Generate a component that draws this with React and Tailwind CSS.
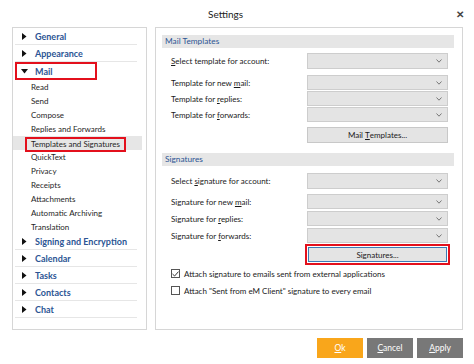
import React from "react";

const FONT = { fontFamily: 'Lato, "Open Sans", sans-serif' };

function Arrow({ down }) {
  return down ? (
    <svg width="7" height="5" viewBox="0 0 7 5" className="shrink-0">
      <polygon points="0,0 7,0 3.5,4.5" fill="#111" />
    </svg>
  ) : (
    <svg width="5" height="7" viewBox="0 0 5 7" className="shrink-0">
      <polygon points="0,0 4.5,3.5 0,7" fill="#111" />
    </svg>
  );
}

function TopItem({ label, h = "h-[17px]" }) {
  return (
    <div className={`${h} border-b border-[#e6e6e6] flex items-center`}>
      <div className="w-[20px] shrink-0 flex pl-[7px]">
        <Arrow />
      </div>
      <span className="text-[9px] font-bold text-[#2c5594] leading-none whitespace-nowrap">{label}</span>
    </div>
  );
}

function SubItem({ label, active }) {
  if (active) {
    return (
      <div className="h-[14px] flex items-center bg-[#e6e6e6] ml-[-2px] mr-[-5px] pl-[12px]">
        <span className="border-2 border-[#e3101c] px-[4px] h-[15px] mt-[2px] flex items-center text-[8px] text-[#1f1f1f] leading-none whitespace-nowrap">
          {label}
        </span>
      </div>
    );
  }
  return (
    <div className="h-[14px] flex items-center pl-[16px] text-[8px] text-[#1f1f1f] leading-none whitespace-nowrap">
      {label}
    </div>
  );
}

function Chevron() {
  return (
    <svg width="6" height="4" viewBox="0 0 6 4">
      <polyline points="0.5,0.5 3,3.2 5.5,0.5" fill="none" stroke="#777" strokeWidth="1" />
    </svg>
  );
}

function Dropdown({ h = "h-[16px]" }) {
  return (
    <div className={`${h} w-[141px] shrink-0 bg-[#e4e4e4] border border-[#cdcdcd] flex items-center justify-end pr-[5px]`}>
      <Chevron />
    </div>
  );
}

function Row({ children, h }) {
  return (
    <div className="flex items-center pr-[6px]">
      <div className="flex-1 pl-[9px] text-[8px] text-[#1a1a1a] leading-none whitespace-nowrap">{children}</div>
      <Dropdown h={h} />
    </div>
  );
}

function Header({ children }) {
  return (
    <div className="h-[13px] bg-[#e6e6e6] flex items-center pl-[3px] text-[8.3px] text-[#2c5594] leading-none whitespace-nowrap">
      {children}
    </div>
  );
}

function Checkbox({ checked, children }) {
  return (
    <div className="h-[11px] flex items-center pl-[9px]">
      <div className="w-[9px] h-[9px] shrink-0 border border-[#555] bg-white flex items-center justify-center">
        {checked && (
          <svg width="7" height="6" viewBox="0 0 7 6">
            <polyline points="0.5,3 2.6,5 6.5,0.6" fill="none" stroke="#333" strokeWidth="1" />
          </svg>
        )}
      </div>
      <span className="ml-[4px] text-[8px] text-[#1a1a1a] leading-none whitespace-nowrap">{children}</span>
    </div>
  );
}

export default function App() {
  return (
    <div className="w-[474px] h-[364px] bg-white overflow-hidden" style={FONT}>
      <div className="h-[27px] flex items-center">
        <span className="ml-[208px] text-[10px] text-[#222] leading-none">Settings</span>
        <span className="ml-auto mr-[10px] text-[10px] font-bold text-[#444] leading-none">✕</span>
      </div>
      <div className="flex pl-[12px] gap-[8px]">
        {/* Left panel */}
        <div className="w-[135px] h-[303px] border border-[#d6d6d6] bg-white pl-[2px] pr-[9px]">
          <TopItem label="General" />
          <TopItem label="Appearance" />
          <div className="h-[18px] w-[82px] border-2 border-[#e3101c] flex items-center">
            <div className="w-[18px] shrink-0 flex pl-[4px]">
              <Arrow down />
            </div>
            <span className="text-[9px] font-bold text-[#2c5594] leading-none">Mail</span>
          </div>
          <SubItem label="Read" />
          <SubItem label="Send" />
          <SubItem label="Compose" />
          <SubItem label="Replies and Forwards" />
          <SubItem label="Templates and Signatures" active />
          <SubItem label="QuickText" />
          <SubItem label="Privacy" />
          <SubItem label="Receipts" />
          <SubItem label="Attachments" />
          <SubItem label="Automatic Archiving" />
          <SubItem label="Translation" />
          <TopItem label="Signing and Encryption" h="h-[16px]" />
          <TopItem label="Calendar" />
          <TopItem label="Tasks" />
          <TopItem label="Contacts" />
          <TopItem label="Chat" />
        </div>
        {/* Right panel */}
        <div className="w-[308px] h-[303px] border border-[#d6d6d6] bg-white pl-[6px] pr-[8px] pt-[7px]">
          <Header>Mail Templates</Header>
          <div className="mt-[5px]">
            <Row>
              <u>S</u>elect template for account:
            </Row>
          </div>
          <div className="mt-[6px] flex flex-col gap-[1px]">
            <Row h="h-[15px]">
              Template for new <u>m</u>ail:
            </Row>
            <Row h="h-[15px]">
              Template for <u>r</u>eplies:
            </Row>
            <Row h="h-[15px]">
              Template for <u>f</u>orwards:
            </Row>
          </div>
          <div className="mt-[5px] flex justify-end pr-[6px]">
            <div className="w-[141px] h-[16px] bg-[#e4e4e4] border border-[#c8c8c8] flex items-center justify-center text-[8px] text-[#1a1a1a] leading-none whitespace-pre">
              {"Mail "}<u>T</u>emplates...
            </div>
          </div>
          <div className="mt-[10px]">
            <Header>Signatures</Header>
          </div>
          <div className="mt-[7px]">
            <Row>
              Select <u>s</u>ignature for account:
            </Row>
          </div>
          <div className="mt-[5px] flex flex-col gap-[2px]">
            <Row h="h-[15px]">
              Signature for new <u>m</u>ail:
            </Row>
            <Row h="h-[15px]">
              Signature for <u>r</u>eplies:
            </Row>
            <Row h="h-[15px]">
              Signature for <u>f</u>orwards:
            </Row>
          </div>
          <div className="mt-[4px] flex justify-end pr-[7px]">
            <div className="w-[139px] h-[15px] bg-[#e4e4e4] border border-[#3b7bb5] outline-2 outline-[#e3101c] outline-offset-[1px] flex items-center justify-center text-[8px] text-[#1a1a1a] leading-none">
              Signatures...
            </div>
          </div>
          <div className="mt-[6px]">
            <Checkbox checked>Attach signature to emails sent from external applications</Checkbox>
          </div>
          <div className="mt-[6px]">
            <Checkbox>Attach "Sent from eM Client" signature to every email</Checkbox>
          </div>
        </div>
      </div>
      <div className="mt-[8px] flex justify-end gap-[4px] pr-[11px]">
        <div className="w-[46px] h-[20px] bg-[#f9a61b] flex items-center justify-center text-[8.5px] text-white leading-none">
          <u>O</u>k
        </div>
        <div className="w-[46px] h-[20px] bg-[#787878] flex items-center justify-center text-[8.5px] text-white leading-none">
          <u>C</u>ancel
        </div>
        <div className="w-[46px] h-[20px] bg-[#787878] flex items-center justify-center text-[8.5px] text-white leading-none">
          <u>A</u>pply
        </div>
      </div>
    </div>
  );
}
